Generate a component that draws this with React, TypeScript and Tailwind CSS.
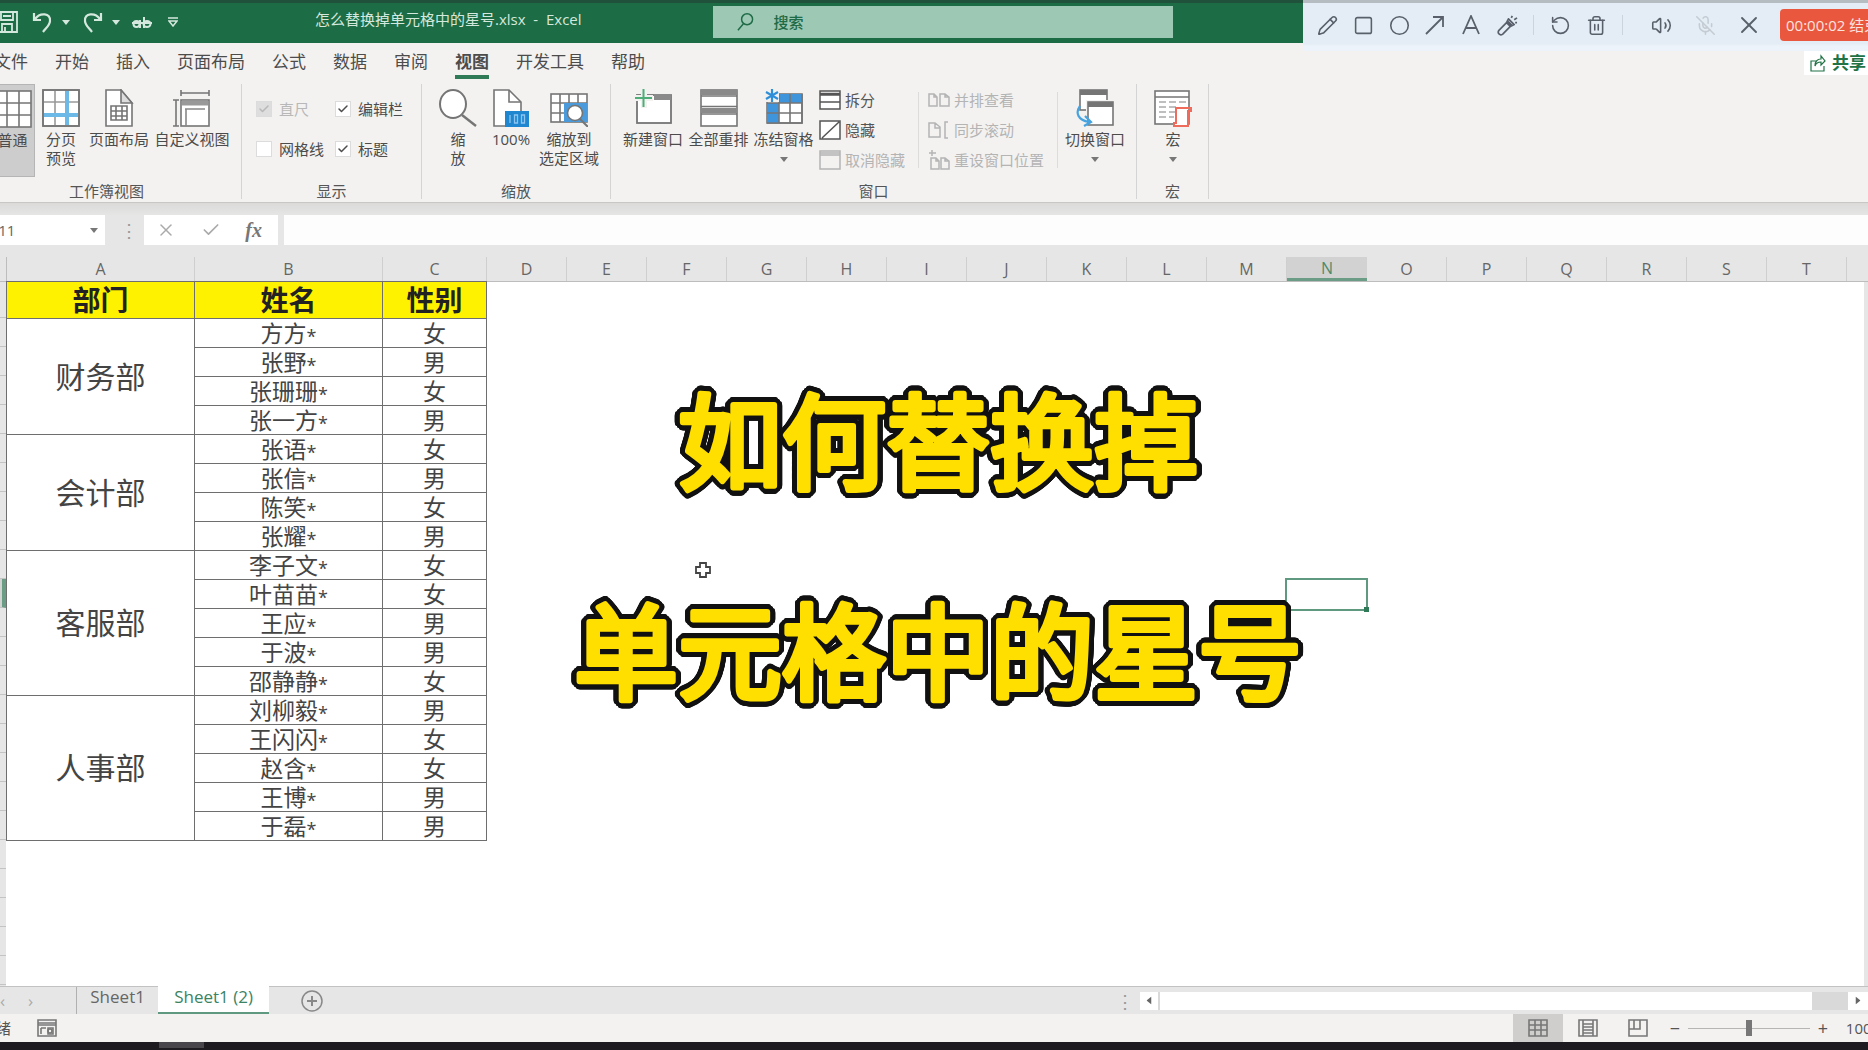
import React, { useState } from "react";
import type { ReactNode } from "react";
import {
  Pencil,
  Square,
  Circle,
  RotateCcw,
  Trash2,
  Volume2,
  MicOff,
  X,
  Check,
} from "lucide-react";

const TABS = ["文件", "开始", "插入", "页面布局", "公式", "数据", "审阅", "视图", "开发工具", "帮助"];
const LETTERS = "DEFGHIJKLMNOPQRST".split("");
const DEPARTMENTS: { name: string; people: [string, string][] }[] = [
  { name: "财务部", people: [["方方", "女"], ["张野", "男"], ["张珊珊", "女"], ["张一方", "男"]] },
  { name: "会计部", people: [["张语", "女"], ["张信", "男"], ["陈笑", "女"], ["张耀", "男"]] },
  { name: "客服部", people: [["李子文", "女"], ["叶苗苗", "女"], ["王应", "男"], ["于波", "男"], ["邵静静", "女"]] },
  { name: "人事部", people: [["刘柳毅", "男"], ["王闪闪", "女"], ["赵含", "女"], ["王博", "男"], ["于磊", "男"]] },
];

/* ---------- icons ---------- */

function Caret({ className = "" }: { className?: string }) {
  return (
    <svg viewBox="0 0 8 5" className={"h-[5px] w-2 shrink-0 " + className} fill="currentColor">
      <path d="M0 0h8L4 5z" />
    </svg>
  );
}

function Icon({ children }: { children: ReactNode }) {
  return (
    <svg viewBox="0 0 38 38" className="h-[38px] w-[38px] shrink-0" fill="none" stroke="#757575" strokeWidth="1.6">
      {children}
    </svg>
  );
}

const normalIcon = (
  <Icon>
    <rect x="1" y="1" width="36" height="36" fill="#fff" />
    <path d="M1 13h36M1 25h36M13 1v36M25 1v36" />
  </Icon>
);
const pageBreakIcon = (
  <Icon>
    <rect x="1" y="1" width="36" height="36" fill="#fff" />
    <path d="M1 13h36M13 1v36M1 25h36M25 1v36" stroke="#999" />
    <path d="M25 2v34M2 26h34" stroke="#6cb8e6" strokeWidth="4" />
    <rect x="1" y="1" width="36" height="36" />
  </Icon>
);
const pageLayoutIcon = (
  <Icon>
    <path d="M6 1h15l11 13v23H6z" fill="#fff" />
    <path d="M21 1v13h11z" fill="#ddd" />
    <path d="M11 17h16v14H11zM11 22h16M11 27h16M16 17v14M22 17v14" />
  </Icon>
);
const customViewIcon = (
  <Icon>
    <path d="M8 4h28M8 1v6M36 1v6M3 11v26M0 11h6M0 37h6" />
    <rect x="8" y="11" width="28" height="26" fill="#fff" />
    <path d="M9 14h26" stroke="#999" strokeWidth="5" />
    <path d="M12 20h20M13 20v17" stroke="#888" />
  </Icon>
);
const zoomIcon = (
  <Icon>
    <ellipse cx="14" cy="15" rx="13" ry="14" fill="#fff" strokeWidth="2" />
    <path d="M23 26l14 11" strokeWidth="2.4" />
  </Icon>
);
const hundredIcon = (
  <Icon>
    <path d="M2 1h15l12 12v24H2z" fill="#fff" />
    <path d="M17 1v12h12" />
    <rect x="13" y="22" width="24" height="16" fill="#1f86d0" stroke="none" />
    <path d="M18 26v8M22.500 26h3v8h-3zM29.500 26h3v8h-3z" stroke="#8cc6f0" strokeWidth="1.300" />
  </Icon>
);
const zoomSelIcon = (
  <Icon>
    <rect x="1" y="5" width="36" height="28" fill="#fff" />
    <path d="M1 14h36M1 24h36M10 5v28M19 5v28M28 5v28" />
    <path d="M14 14h23v19H14z" fill="#4b9bdc" stroke="none" />
    <circle cx="25" cy="24" r="7.500" fill="#fff" />
    <path d="M30 30l8 8" strokeWidth="2" />
  </Icon>
);
const newWindowIcon = (
  <Icon>
    <rect x="3" y="6" width="34" height="28" fill="#fff" strokeWidth="1.800" />
    <path d="M20 8h17" stroke="#8a8a8a" strokeWidth="6" />
    <path d="M0 9h19M10 0v19" stroke="#f3f2f1" strokeWidth="6" />
    <path d="M1 9h17M9.500 0v18" stroke="#4fae78" strokeWidth="2" />
  </Icon>
);
const arrangeIcon = (
  <Icon>
    <rect x="1" y="1" width="36" height="36" fill="#fff" />
    <path d="M1 3.500h36M1 21.500h36" stroke="#8a8a8a" strokeWidth="5" />
    <path d="M1 17.500h36M1 25h36M1 7h36" />
  </Icon>
);
const freezeIcon = (
  <Icon>
    <rect x="2" y="5" width="35" height="29" fill="#fff" />
    <path d="M14 5h23v9H14zM2 14h12v20H2z" fill="#3f95dc" stroke="none" />
    <path d="M2 14h35M2 24h35M14 5v29M25 5v29M37 5v29H2" />
    <path d="M-1 -1h15v14H-1z" fill="#f3f2f1" stroke="none" />
    <path d="M7 0v13M1 3l12 7M13 3L1 10" stroke="#2f8fd8" strokeWidth="2.200" />
  </Icon>
);
const switchIcon = (
  <Icon>
    <rect x="4" y="1" width="27" height="20" fill="#fff" />
    <path d="M4 3.500h27" strokeWidth="5" />
    <rect x="12" y="13" width="25" height="23" fill="#fff" stroke="#f3f2f1" strokeWidth="4" />
    <rect x="12" y="13" width="25" height="23" fill="#fff" />
    <path d="M12 15.500h25" strokeWidth="5" />
    <path d="M4 17c-5 7-2 14 9 16M9 27l6 6-7 4" stroke="#46a3df" strokeWidth="2.200" />
  </Icon>
);
const macroIcon = (
  <Icon>
    <rect x="1" y="2" width="34" height="33" fill="#fff" />
    <path d="M1 8h34" />
    <path d="M5 13h7M15 13h7M25 13h7M5 18h7M15 18h7M5 23h7M15 23h7M5 28h7M15 28h5" stroke="#aaa" />
    <path d="M22 19h14v3h-2v15H20v-3h2zM34 22h4v-3h-4" fill="#fff" stroke="#ef6b5b" strokeWidth="2" />
  </Icon>
);

function SmallIcon({ kind }: { kind: string }) {
  return (
    <svg viewBox="0 0 22 20" className="h-5 w-[22px] shrink-0" fill="none" stroke="currentColor" strokeWidth="1.5">
      {kind === "split" && <path d="M1 1h20v18H1zM1 3.500h20M1 5h20M1 12h20" fill="#fff" />}
      {kind === "hide" && <path d="M1 1h20v18H1zM3 18L20 2" fill="#fff" />}
      {kind === "unhide" && <path d="M1 1h20v18H1zM1 3h20M1 5h20" />}
      {kind === "side" && <path d="M1 4h5l3 3v9H1zM12 4h5l4 3v9h-9zM6 4v3h3M17 4v3h4" />}
      {kind === "sync" && <path d="M1 3h6l5 4v10H1zM7 3v5h5M20 2h-3v16h3" />}
      {kind === "reset" && <path d="M3 8h5l3 3v8H3zM13 8h4l4 3v8h-8zM8 8v3h3M17 8v3h4M1 3h7M4 0v6" />}
    </svg>
  );
}

/* ---------- ribbon pieces ---------- */

function BigButton({
  icon,
  lines,
  width,
  caret,
  active,
}: {
  icon: ReactNode;
  lines: string[];
  width: string;
  caret?: boolean;
  active?: boolean;
}) {
  return (
    <button
      type="button"
      className={
        "flex h-[93px] shrink-0 flex-col items-center pt-[5px] " +
        width +
        (active ? " border border-[#b5b5b5] bg-[#cdcdcd]" : "")
      }
    >
      {icon}
      <span className="mt-[3px] text-[15px] leading-[19px] whitespace-nowrap">
        {lines.map((l) => (
          <span key={l} className="block">
            {l}
          </span>
        ))}
      </span>
      {caret && <Caret className="mt-2 text-[#777]" />}
    </button>
  );
}

function Group({ label, width, children }: { label: string; width: string; children: ReactNode }) {
  return (
    <section className={"flex h-[115px] shrink-0 flex-col justify-between border-r border-[#d4d4d4] " + width}>
      <div className="flex">{children}</div>
      <div className="text-center text-[15px] leading-4 text-[#555]">{label}</div>
    </section>
  );
}

function Tick({ label, checked, disabled }: { label: string; checked?: boolean; disabled?: boolean }) {
  const [on, setOn] = useState(!!checked);
  return (
    <label className={"flex items-center gap-[7px] text-[15px] leading-5 " + (disabled ? "text-[#b8b8b8]" : "")}>
      <span className="grid h-4 w-4 place-items-center">
        <input
          type="checkbox"
          checked={on}
          disabled={disabled}
          onChange={() => setOn(!on)}
          className="col-start-1 row-start-1 h-4 w-4 appearance-none border border-[#dcdcdc] bg-white disabled:bg-[#dedede]"
        />
        {on && <Check className="pointer-events-none col-start-1 row-start-1 h-3 w-3" strokeWidth={3} />}
      </span>
      {label}
    </label>
  );
}

function SmallButton({ kind, label, disabled }: { kind: string; label: string; disabled?: boolean }) {
  return (
    <button
      type="button"
      disabled={disabled}
      className="flex h-[30px] items-center gap-1 text-[15px] whitespace-nowrap text-[#555] disabled:text-[#b4b4b4]"
    >
      <SmallIcon kind={kind} />
      {label}
    </button>
  );
}

/* ---------- title bar ---------- */

function TitleBar() {
  return (
    <header className="flex h-[43px] items-center border-t-3 border-[#20523b] bg-[#1c6c45] pb-[2px] text-[#d5e8dd]">
      <div className="flex w-[315px] shrink-0 items-center">
        <button type="button" aria-label="保存" className="-ml-1">
          <svg viewBox="0 0 22 22" className="h-[22px] w-[22px]" fill="none" stroke="currentColor" strokeWidth="1.8">
            <path d="M1 1h20v20H1zM5 1v8h12V1M6 21v-8h10v8M9 16v5M7 5h8" />
          </svg>
        </button>
        <button type="button" aria-label="撤消" className="ml-[14px] flex items-center gap-2">
          <svg viewBox="0 0 22 22" className="h-[22px] w-[22px]" fill="none" stroke="currentColor" strokeWidth="2.2">
            <path d="M2 2v7h7M3 8C8 1 19 2 18 10c0 4-4 7-7 11" />
          </svg>
          <Caret />
        </button>
        <button type="button" aria-label="恢复" className="ml-3 flex items-center gap-2">
          <svg viewBox="0 0 22 22" className="h-[22px] w-[22px]" fill="none" stroke="currentColor" strokeWidth="2.2">
            <path d="M19 2v7h-7M18 8C13 1 2 2 3 10c0 4 4 7 7 11" />
          </svg>
          <Caret />
        </button>
        <button type="button" aria-label="查找" className="ml-[12px]">
          <svg viewBox="0 0 20 14" className="h-[14px] w-5" fill="none" stroke="currentColor" strokeWidth="2">
            <ellipse cx="4.500" cy="9" rx="3" ry="3" />
            <path d="M8 5v8M12 2v11" />
            <ellipse cx="15" cy="9" rx="3.500" ry="3" />
            <path d="M0 8h20" />
          </svg>
        </button>
        <button type="button" aria-label="自定义快速访问工具栏" className="ml-4">
          <svg viewBox="0 0 10 10" className="h-[10px] w-[10px]" fill="none" stroke="currentColor" strokeWidth="1.5">
            <path d="M0 1h10M1 4h8L5 9z" />
          </svg>
        </button>
      </div>
      <h1 className="w-[398px] shrink-0 pb-[6px] text-[15px] leading-5 whitespace-pre">
        怎么替换掉单元格中的星号.xlsx  -  Excel
      </h1>
      <label className="flex h-8 w-[460px] shrink-0 items-center bg-[#9dc8b4] pl-6 text-[#1f6b47]">
        <svg viewBox="0 0 18 20" className="h-5 w-[18px]" fill="none" stroke="currentColor" strokeWidth="1.6" aria-hidden>
          <circle cx="11" cy="7" r="6" />
          <path d="M7 12L1 19" />
        </svg>
        <input
          aria-label="搜索"
          placeholder="搜索"
          className="ml-5 w-full bg-transparent text-[15px] font-medium outline-none placeholder:text-[#1f6b47]"
        />
      </label>
    </header>
  );
}

function RecorderBar() {
  const cls = "h-[21px] w-[21px]";
  const tool = "flex w-9 shrink-0 justify-center";
  return (
    <div
      role="toolbar"
      className="absolute top-0 right-0 flex h-[51px] w-[565px] items-center overflow-hidden border-t-3 border-[#b5bdc3] bg-linear-to-b from-[#e4edf5] from-85% to-[#edf3fb] to-90% pb-1 pl-[6px] text-[#59606b]"
    >
      <button type="button" aria-label="画笔" className={tool}><Pencil className={cls} strokeWidth={1.8} /></button>
      <button type="button" aria-label="矩形" className={tool}><Square className={cls} strokeWidth={1.8} /></button>
      <button type="button" aria-label="椭圆" className={tool}><Circle className={cls} strokeWidth={1.8} /></button>
      <button type="button" aria-label="箭头" className={tool}>
        <svg viewBox="0 0 20 20" className="h-5 w-5" fill="none" stroke="currentColor" strokeWidth="1.8">
          <path d="M1 19L18 2M8 2h10v10" />
        </svg>
      </button>
      <button type="button" aria-label="文字" className={tool}>
        <svg viewBox="0 0 20 20" className="h-5 w-5" fill="none" stroke="currentColor" strokeWidth="1.8">
          <path d="M2 19L10 1l8 18M5 13h10" />
        </svg>
      </button>
      <button type="button" aria-label="荧光笔" className={tool}>
        <svg viewBox="0 0 22 22" className={cls} fill="none" stroke="currentColor" strokeWidth="1.8" strokeLinejoin="round">
          <path d="M2 16l8-8 4 4-8 8c-3 2-6-1-4-4zM10 8l2-4 6 6-4 2M15 3l1-2M18 5l3-2M19 8l2 0" />
          <path d="M11 7l4 4" strokeWidth="3" />
        </svg>
      </button>
      <span className="ml-2 h-5 w-px shrink-0 bg-[#cbd3dc]" />
      <button type="button" aria-label="撤销" className={tool + " ml-2"}><RotateCcw className={cls} strokeWidth={1.8} /></button>
      <button type="button" aria-label="清空" className={tool}><Trash2 className={cls} strokeWidth={1.8} /></button>
      <span className="ml-2 h-5 w-px shrink-0 bg-[#cbd3dc]" />
      <button type="button" aria-label="声音" className={tool + " ml-5"}><Volume2 className={cls} strokeWidth={1.8} /></button>
      <button type="button" aria-label="麦克风" className={tool + " ml-2 text-[#c5cbd3]"}><MicOff className={cls} strokeWidth={1.8} /></button>
      <button type="button" aria-label="关闭" className={tool + " ml-2"}><X className="h-7 w-7" strokeWidth={1.6} /></button>
      <button
        type="button"
        className="ml-[13px] h-8 shrink-0 rounded-l bg-[#e9573f] pl-[6px] text-[15px] whitespace-nowrap text-[#fbe3df]"
      >
        00:00:02 结束
      </button>
    </div>
  );
}

/* ---------- ribbon ---------- */

function Ribbon() {
  return (
    <div className="border-b border-[#c9c7c5] bg-[#f3f2f1] text-[#4c4c4c]">
      <nav className="flex h-[41px] items-start">
        <div className="-ml-[6px] flex gap-[27px]">
          {TABS.map((t) => (
            <button
              key={t}
              type="button"
              className={
                "h-[36px] border-b-4 pt-1 text-[17px] leading-[25px] whitespace-nowrap " +
                (t === "视图" ? "border-[#2f7b57] font-bold" : "border-transparent")
              }
            >
              {t}
            </button>
          ))}
        </div>
        <button
          type="button"
          className="mt-2 -mr-1 ml-auto flex h-6 items-center gap-[6px] bg-white pr-[6px] pl-[6px] text-[17px] leading-6 font-bold text-[#217346]"
        >
          <svg viewBox="0 0 16 18" className="h-[18px] w-4" fill="none" stroke="currentColor" strokeWidth="1.2">
            <path d="M6 7H1v10h13v-5M5 12c0-5 3-7 6-7V2l4 5-4 4V8c-3 0-5 1-6 4z" />
          </svg>
          共享
        </button>
      </nav>
      <div className="flex h-[118px] overflow-hidden">
        <Group label="工作簿视图" width="-ml-7 w-[270px]">
          <div className="ml-[18px] flex">
            <BigButton icon={normalIcon} lines={["普通"]} width="w-[45px]" active />
            <BigButton icon={pageBreakIcon} lines={["分页", "预览"]} width="w-[52px]" />
            <BigButton icon={pageLayoutIcon} lines={["页面布局"]} width="w-[64px]" />
            <BigButton icon={customViewIcon} lines={["自定义视图"]} width="w-[82px]" />
          </div>
        </Group>
        <Group label="显示" width="w-[180px]">
          <div className="grid grid-cols-[79px_auto] gap-y-5 pt-[15px] pl-[14px]">
            <Tick label="直尺" checked disabled />
            <Tick label="编辑栏" checked />
            <Tick label="网格线" />
            <Tick label="标题" checked />
          </div>
        </Group>
        <Group label="缩放" width="w-[189px]">
          <BigButton icon={zoomIcon} lines={["缩", "放"]} width="ml-[10px] w-[52px]" />
          <BigButton icon={hundredIcon} lines={["100%"]} width="w-[54px]" />
          <BigButton icon={zoomSelIcon} lines={["缩放到", "选定区域"]} width="w-[62px]" />
        </Group>
        <Group label="窗口" width="w-[526px]">
          <BigButton icon={newWindowIcon} lines={["新建窗口"]} width="ml-[9px] w-[66px]" />
          <BigButton icon={arrangeIcon} lines={["全部重排"]} width="w-[65px]" />
          <BigButton icon={freezeIcon} lines={["冻结窗格"]} width="w-[65px]" caret />
          <div className="flex w-[102px] flex-col pt-px pl-[3px]">
            <SmallButton kind="split" label="拆分" />
            <SmallButton kind="hide" label="隐藏" />
            <SmallButton kind="unhide" label="取消隐藏" disabled />
          </div>
          <span className="mt-2 h-[76px] w-px bg-[#dcdcdc]" />
          <div className="flex w-[138px] flex-col pt-px pl-[9px]">
            <SmallButton kind="side" label="并排查看" disabled />
            <SmallButton kind="sync" label="同步滚动" disabled />
            <SmallButton kind="reset" label="重设窗口位置" disabled />
          </div>
          <span className="mt-2 h-[76px] w-px bg-[#dcdcdc]" />
          <BigButton icon={switchIcon} lines={["切换窗口"]} width="ml-1 w-[66px]" caret />
        </Group>
        <Group label="宏" width="w-[72px]">
          <BigButton icon={macroIcon} lines={["宏"]} width="w-[72px]" caret />
        </Group>
      </div>
    </div>
  );
}

function FormulaBar() {
  return (
    <div className="flex h-[42px] items-end bg-linear-to-b from-[#dbdad9] to-[#e6e6e6] to-30% text-[#666]">
      <div className="-ml-4 flex h-[30px] w-[121px] shrink-0 items-center bg-white pr-[7px]">
        <input aria-label="名称框" defaultValue="N11" className="w-full pl-[3px] text-[15px] outline-none" />
        <Caret className="text-[#777]" />
      </div>
      <span className="w-[39px] pl-[9px] text-center text-[18px] leading-[30px] text-[#999]">⋮</span>
      <div className="flex h-[30px] w-[134px] shrink-0 items-center justify-between bg-white px-3 text-[#aaa]">
        <button type="button" aria-label="取消"><X className="h-5 w-5" strokeWidth={1.8} /></button>
        <button type="button" aria-label="输入"><Check className="h-5 w-5" strokeWidth={2} /></button>
        <button type="button" aria-label="插入函数" className="pr-1 font-['Liberation_Serif',serif] text-[20px] leading-6 font-bold text-[#777] italic">
          fx
        </button>
      </div>
      <input aria-label="编辑栏" className="ml-[6px] h-[30px] min-w-0 flex-1 bg-[#fdfdfd] outline-none" />
    </div>
  );
}

/* ---------- sheet ---------- */

function ColumnHeads() {
  const base = "flex h-6 shrink-0 items-center justify-center border-r border-[#cfcfcf] ";
  return (
    <div className="flex h-[37px] items-end overflow-hidden border-b border-[#bdbdbd] bg-[#e6e6e6] text-[16px] text-[#666]">
      <div className="h-6 w-[7px] shrink-0 border-r border-[#bdbdbd]" />
      <div className={base + "w-[188px]"}>A</div>
      <div className={base + "w-[188px]"}>B</div>
      <div className={base + "w-[104px]"}>C</div>
      {LETTERS.map((l) => (
        <div
          key={l}
          className={
            l === "N"
              ? "flex h-6 w-20 shrink-0 items-center justify-center border-b-3 border-[#6a9c86] bg-[#d2d2d2] text-[#4d8a6d]"
              : base + "w-20"
          }
        >
          {l}
        </div>
      ))}
    </div>
  );
}

function DataTable() {
  const cell = "border border-[#6e6e6e] p-0 text-center ";
  return (
    <table className="-mt-px w-[481px] table-fixed border-collapse text-[#444]">
      <colgroup>
        <col className="w-[188px]" />
        <col className="w-[188px]" />
        <col className="w-[104px]" />
      </colgroup>
      <thead>
        <tr className="h-[37px] bg-[#fff200] text-[28px] leading-9 text-[#222]">
          <th className={cell}>部门</th>
          <th className={cell}>姓名</th>
          <th className={cell}>性别</th>
        </tr>
      </thead>
      <tbody>
        {DEPARTMENTS.map((d) =>
          d.people.map(([name, sex], i) => (
            <tr key={name} className="h-[29px] text-[23px] leading-7">
              {i === 0 && (
                <td rowSpan={d.people.length} className={cell + "text-[30px]"}>
                  {d.name}
                </td>
              )}
              <td className={cell}>
                <span className="flex h-7 items-center justify-center">
                  {name}
                  <span className="pt-[6px] text-[18px] leading-5">*</span>
                </span>
              </td>
              <td className={cell}>{sex}</td>
            </tr>
          )),
        )}
      </tbody>
    </table>
  );
}

function WordArt() {
  return (
    <svg
      viewBox="0 0 760 330"
      className="absolute top-[97px] left-[552px] h-[330px] w-[760px] overflow-visible font-normal [filter:drop-shadow(1px_0_#111)_drop-shadow(-1px_0_#111)_drop-shadow(0_1px_#111)_drop-shadow(0_-1px_#111)_drop-shadow(2px_2px_#111)_drop-shadow(-2px_-2px_#111)_drop-shadow(2px_-2px_#111)_drop-shadow(-2px_2px_#111)]"
      fill="#ffdf00"
      stroke="#ffdf00"
      strokeWidth="6"
      strokeLinejoin="round"
      strokeLinecap="round"
      fontSize="104"
      textAnchor="middle"
    >
      <text x="380" y="103">如何替换掉</text>
      <text x="380" y="313">单元格中的星号</text>
    </svg>
  );
}

function Sheet() {
  return (
    <main className="flex min-h-[741px] flex-1 flex-col bg-[#e6e6e6]">
      <ColumnHeads />
      <div className="mr-1 flex flex-1">
        <div className="w-[6px] shrink-0 overflow-hidden pt-[7px]">
          {Array.from({ length: 24 }, (_, i) => (
            <div
              key={i}
              className={
                "h-[29px] border-b border-[#c4c4c4] " + (i === 10 ? "border-r-4 border-r-[#6a9c86] bg-[#d2d2d2]" : "")
              }
            />
          ))}
        </div>
        <div className="relative flex-1 bg-white">
          <DataTable />
          <div className="absolute top-[296px] left-[1279px] h-[33px] w-[83px] border-2 border-[#5f9a80]">
            <span className="absolute -right-[3px] -bottom-[3px] h-[5px] w-[5px] bg-[#2f7b57]" />
          </div>
          <svg
            viewBox="0 0 16 16"
            className="absolute top-[280px] left-[689px] h-4 w-4"
            fill="#fff"
            stroke="#444"
            strokeWidth="1.8"
          >
            <path d="M5 1h6v4h4v6h-4v4H5v-4H1V5h4z" />
          </svg>
          <WordArt />
        </div>
      </div>
    </main>
  );
}

/* ---------- bottom bars ---------- */

function SheetTabs() {
  return (
    <div className="flex h-7 items-center border-t border-[#c2c2c2] bg-[#e6e6e6] text-[17px] text-[#666]">
      <button type="button" aria-label="上一张" className="w-[10px] text-left text-[#aaa]">‹</button>
      <button type="button" aria-label="下一张" className="ml-[18px] text-[#aaa]">›</button>
      <div className="ml-[43px] flex h-7 items-center border-l border-[#b0b0b0]">
        <button type="button" className="h-7 w-[81px] pb-2 leading-5">Sheet1</button>
        <button
          type="button"
          className="-mt-px h-[29px] w-[111px] border-b-3 border-[#5f9a80] bg-white pb-1 leading-5 font-medium text-[#3b8463]"
        >
          Sheet1 (2)
        </button>
      </div>
      <button type="button" aria-label="新工作表" className="ml-[32px]">
        <svg viewBox="0 0 22 22" className="h-[22px] w-[22px]" fill="none" stroke="#888" strokeWidth="1.5">
          <circle cx="11" cy="11" r="10" />
          <path d="M6 11h10M11 6v10" strokeWidth="2" />
        </svg>
      </button>
      <span className="ml-auto w-6 text-[18px] leading-4 text-[#999]">⋮</span>
      <div className="flex h-[18px] w-[728px] bg-[#d9d9d9]">
        <button type="button" aria-label="向左滚动" className="flex w-[18px] items-center justify-center bg-white">
          <Caret className="rotate-90" />
        </button>
        <div className="ml-[2px] w-[652px] bg-white" />
        <button type="button" aria-label="向右滚动" className="ml-auto flex w-5 items-center justify-center bg-white">
          <Caret className="-rotate-90" />
        </button>
      </div>
    </div>
  );
}

function ViewIcon({ d }: { d: string }) {
  return (
    <svg viewBox="0 0 20 18" className="h-[18px] w-5" fill="none" stroke="#777" strokeWidth="1.6">
      <path d={d} />
    </svg>
  );
}

function StatusBar() {
  const view = "flex h-7 w-[50px] shrink-0 items-center justify-center ";
  return (
    <footer className="flex h-7 items-center overflow-hidden bg-[#f3f2f1] text-[15px] text-[#555]">
      <span className="-ml-[19px] w-14">就绪</span>
      <svg viewBox="0 0 20 18" className="h-[18px] w-5" fill="none" stroke="#777" strokeWidth="1.6">
        <path d="M1 1h18v16H1zM1 4h18M1 6h18M4 9v6M4 9h5M11 9h5v6h-5z" />
        <circle cx="13" cy="12" r="2" />
      </svg>
      <button type="button" aria-label="普通" className={view + "ml-auto bg-[#cfcecd]"}>
        <ViewIcon d="M1 1h18v16H1zM1 6h18M1 11h18M7 1v16M13 1v16" />
      </button>
      <button type="button" aria-label="页面布局" className={view}>
        <ViewIcon d="M1 1h18v16H1zM5 1v16M15 1v16M5 5h10M5 8h10M5 11h10M5 14h10" />
      </button>
      <button type="button" aria-label="分页预览" className={view}>
        <ViewIcon d="M1 1h18v16H1zM1 10h11V1M6 1v9" />
      </button>
      <button type="button" aria-label="缩小" className="ml-[7px] w-[10px] text-center text-[18px] leading-5">−</button>
      <input
        type="range"
        aria-label="显示比例"
        defaultValue={50}
        className="mx-2 h-5 w-[122px] appearance-none bg-transparent [&::-webkit-slider-runnable-track]:h-px [&::-webkit-slider-runnable-track]:bg-[#b5b5b5] [&::-webkit-slider-thumb]:-mt-2 [&::-webkit-slider-thumb]:h-4 [&::-webkit-slider-thumb]:w-[6px] [&::-webkit-slider-thumb]:appearance-none [&::-webkit-slider-thumb]:bg-[#777]"
      />
      <button type="button" aria-label="放大" className="w-[10px] text-center text-[18px] leading-5">+</button>
      <span className="-mr-4 ml-[18px] text-[15px]">100%</span>
    </footer>
  );
}

export default function App() {
  return (
    <div className="relative flex min-h-screen flex-col overflow-hidden bg-[#e6e6e6] font-['Open_Sans','Noto_Sans_CJK_SC',sans-serif]">
      <TitleBar />
      <Ribbon />
      <RecorderBar />
      <FormulaBar />
      <Sheet />
      <SheetTabs />
      <StatusBar />
      <div className="h-2 bg-[#1d1b1f]">
        <div className="ml-[159px] h-[6px] w-[45px] bg-[#48464a]" />
      </div>
    </div>
  );
}
